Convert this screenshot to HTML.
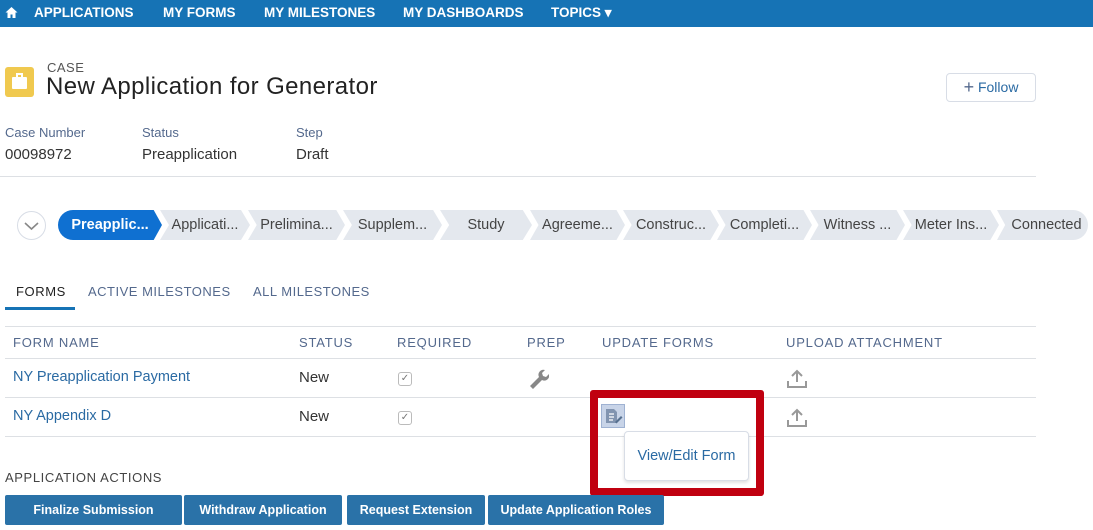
<!DOCTYPE html>
<html><head><meta charset="utf-8"><style>
*{margin:0;padding:0;box-sizing:border-box}
body{width:1093px;height:530px;overflow:hidden;background:#fff;font-family:"Liberation Sans",sans-serif;position:relative;color:#16325c}
.a{position:absolute;white-space:nowrap}
.nav{left:0;top:0;width:1093px;height:27px;background:#1673b5}
.nav span{position:absolute;top:5px;color:#fff;font-weight:bold;font-size:13.5px}
.lbl{font-size:13px;color:#54698d}
.val{font-size:15px;color:#333}
.seg{position:absolute;top:210px;height:30px;background:#e4e8ee;color:#444;font-size:14.5px;line-height:30px;text-align:center}
.th{font-size:13px;color:#54698d;letter-spacing:.8px;top:335px}
.hl{position:absolute;left:5px;width:1031px;height:1px;background:#dde0e4}
.lnk{color:#2a6aa3;font-size:14.5px}
.chk{position:absolute;width:14px;height:14px;border:1px solid #bbb;border-radius:3px;font-size:10px;color:#777;text-align:center;line-height:12px}
.btn{position:absolute;top:495px;height:30px;background:#2a72a8;color:#fff;font-size:12.5px;font-weight:bold;text-align:center;line-height:30px;border-radius:2px}
</style></head><body>
<div class="a nav">
<svg style="position:absolute;left:5px;top:6px" width="13" height="13" viewBox="0 0 13 13"><path d="M6.5 1L0.5 6.5H2.5V12H5.5V8.5H7.5V12H10.5V6.5H12.5Z" fill="#fff"/></svg>
<span style="left:34px">APPLICATIONS</span><span style="left:163px">MY FORMS</span><span style="left:264px">MY MILESTONES</span><span style="left:403px">MY DASHBOARDS</span><span style="left:551px">TOPICS ▾</span>
</div>
<div class="a" style="left:5px;top:67px;width:29px;height:30px;background:#f0c94f;border-radius:3px"><div style="position:absolute;left:7px;top:10px;width:15px;height:12px;background:#fff;border-radius:1px"></div><div style="position:absolute;left:11px;top:6px;width:7px;height:5px;border:2px solid #fff;border-bottom:none"></div></div>
<div class="a" style="left:47px;top:60px;font-size:13px;color:#555;letter-spacing:.5px">CASE</div>
<div class="a" style="left:46px;top:73px;font-size:24px;color:#222;letter-spacing:.4px">New Application for Generator</div>
<div class="a" style="left:946px;top:73px;width:90px;height:29px;border:1px solid #d8dde6;border-radius:4px;font-size:14px;color:#2a6aa3;line-height:27px;text-align:center"><span style="font-size:18px;color:#54698d;vertical-align:-1px">+</span> Follow</div>
<div class="a lbl" style="left:5px;top:125px">Case Number</div><div class="a lbl" style="left:142px;top:125px">Status</div><div class="a lbl" style="left:296px;top:125px">Step</div>
<div class="a val" style="left:5px;top:146px">00098972</div><div class="a val" style="left:142px;top:146px">Preapplication</div><div class="a val" style="left:296px;top:146px">Draft</div>
<div class="hl" style="top:176px;left:0;width:1036px"></div>
<div class="a" style="left:17px;top:211px;width:29px;height:29px;border:1px solid #d8dde6;border-radius:50%"><svg width="27" height="27" viewBox="0 0 27 27"><path d="M7 11l6.5 6 6.5-6" stroke="#888" stroke-width="1.6" fill="none"/></svg></div>
<div class="seg" style="left:58px;width:104px;background:#0f70d1;color:#fff;font-weight:bold;border-radius:15px 0 0 15px;clip-path:polygon(0 0,92% 0,100% 50%,92% 100%,0 100%)">Preapplic...</div>
<div class="seg" style="left:160px;width:90px;clip-path:polygon(0 0,90% 0,100% 50%,90% 100%,0 100%,10% 50%)">Applicati...</div>
<div class="seg" style="left:248px;width:97px;clip-path:polygon(0 0,91% 0,100% 50%,91% 100%,0 100%,9% 50%)">Prelimina...</div>
<div class="seg" style="left:343px;width:99px;clip-path:polygon(0 0,91% 0,100% 50%,91% 100%,0 100%,9% 50%)">Supplem...</div>
<div class="seg" style="left:440px;width:92px;clip-path:polygon(0 0,90% 0,100% 50%,90% 100%,0 100%,10% 50%)">Study</div>
<div class="seg" style="left:530px;width:95px;clip-path:polygon(0 0,91% 0,100% 50%,91% 100%,0 100%,9% 50%)">Agreeme...</div>
<div class="seg" style="left:623px;width:96px;clip-path:polygon(0 0,91% 0,100% 50%,91% 100%,0 100%,9% 50%)">Construc...</div>
<div class="seg" style="left:717px;width:95px;clip-path:polygon(0 0,91% 0,100% 50%,91% 100%,0 100%,9% 50%)">Completi...</div>
<div class="seg" style="left:810px;width:95px;clip-path:polygon(0 0,91% 0,100% 50%,91% 100%,0 100%,9% 50%)">Witness ...</div>
<div class="seg" style="left:903px;width:96px;clip-path:polygon(0 0,91% 0,100% 50%,91% 100%,0 100%,9% 50%)">Meter Ins...</div>
<div class="seg" style="left:997px;width:91px;padding-left:8px;border-radius:0 15px 15px 0;clip-path:polygon(0 0,100% 0,100% 100%,0 100%,9% 50%)">Connected</div>
<div class="a" style="left:16px;top:284px;font-size:13px;color:#222;letter-spacing:.6px">FORMS</div>
<div class="a" style="left:88px;top:284px;font-size:13px;color:#54698d;letter-spacing:.5px">ACTIVE MILESTONES</div>
<div class="a" style="left:253px;top:284px;font-size:13px;color:#54698d;letter-spacing:.5px">ALL MILESTONES</div>
<div class="a" style="left:5px;top:307px;width:70px;height:3px;background:#1673b5"></div>
<div class="hl" style="top:326px"></div>
<div class="a th" style="left:13px">FORM NAME</div><div class="a th" style="left:299px">STATUS</div><div class="a th" style="left:397px">REQUIRED</div><div class="a th" style="left:527px">PREP</div><div class="a th" style="left:602px">UPDATE FORMS</div><div class="a th" style="left:786px">UPLOAD ATTACHMENT</div>
<div class="hl" style="top:358px"></div>
<div class="a lnk" style="left:13px;top:369px">NY Preapplication Payment</div><div class="a val" style="left:299px;top:369px">New</div>
<div class="chk" style="left:398px;top:372px">✓</div>
<svg class="a" style="left:527px;top:367px" width="22" height="22" viewBox="0 0 22 22"><path d="M3 19l9-9a5 5 0 0 1 6-7l-3 3 1 3 3 1 3-3a5 5 0 0 1-7 6l-9 9z" fill="#888"/></svg>
<svg class="a" style="left:786px;top:367px" width="22" height="22" viewBox="0 0 22 22"><path d="M11 15V4M6 9l5-5 5 5M2 14v6h18v-6" stroke="#999" stroke-width="2" fill="none"/></svg>
<div class="hl" style="top:397px"></div>
<div class="a lnk" style="left:13px;top:408px">NY Appendix D</div><div class="a val" style="left:299px;top:408px">New</div>
<div class="chk" style="left:398px;top:411px">✓</div>
<svg class="a" style="left:786px;top:406px" width="22" height="22" viewBox="0 0 22 22"><path d="M11 15V4M6 9l5-5 5 5M2 14v6h18v-6" stroke="#999" stroke-width="2" fill="none"/></svg>
<div class="hl" style="top:436px"></div>
<div class="a" style="left:590px;top:390px;width:174px;height:106px;border:8px solid #c00010;border-radius:3px"></div>
<div class="a" style="left:601px;top:404px;width:24px;height:24px;background:#c8d4e8;border:1px solid #9fb2d2"><svg width="22" height="22" viewBox="0 0 22 22"><path d="M4 4h8l3 3v11H4z" fill="#8194b0"/><path d="M7 9h5M7 12h5M7 15h4" stroke="#fff" stroke-width="1.3"/><path d="M13 17l6-6 1.5 1.5-6 6z" fill="#56708f"/></svg></div>
<div class="a" style="left:624px;top:431px;width:125px;height:50px;background:#fff;border:1px solid #d8dde6;border-radius:4px;box-shadow:0 2px 3px rgba(0,0,0,.12);font-size:14.5px;color:#2a6aa3;line-height:48px;text-align:center">View/Edit Form</div>
<div class="a" style="left:5px;top:470px;font-size:13px;color:#444;letter-spacing:.6px">APPLICATION ACTIONS</div>
<div class="btn" style="left:5px;width:177px">Finalize Submission</div>
<div class="btn" style="left:184px;width:158px">Withdraw Application</div>
<div class="btn" style="left:347px;width:138px">Request Extension</div>
<div class="btn" style="left:488px;width:176px">Update Application Roles</div>
</body></html>
